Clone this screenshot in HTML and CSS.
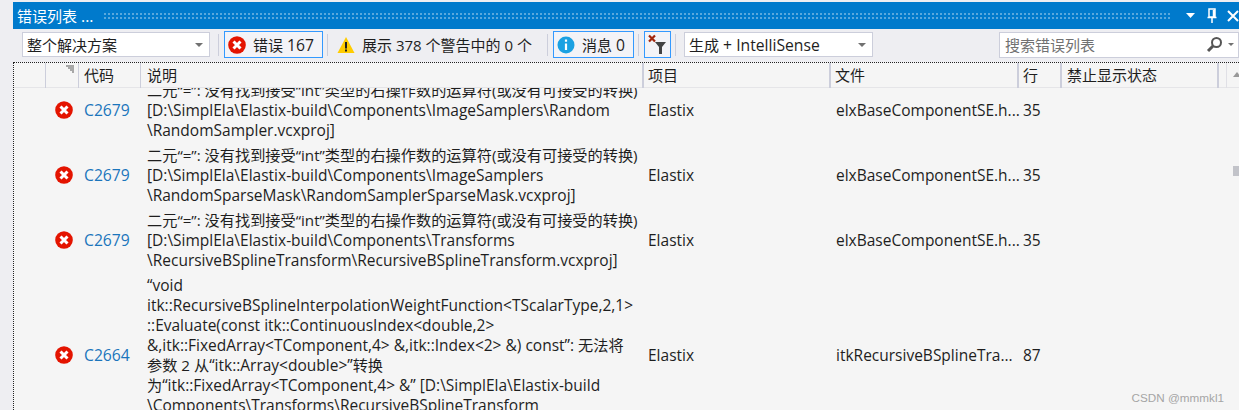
FILE: index.html
```html
<!DOCTYPE html>
<html lang="zh-CN">
<head>
  <meta charset="UTF-8">
  <title>错误列表</title>
  <link rel="stylesheet" href="styles.css">
</head>
<body>
  <svg class="defs" width="0" height="0">
    <symbol id="err" viewBox="0 0 18 18">
      <circle cx="9" cy="9" r="8.800" fill="#e41400"/>
      <path d="M5.500 5.500l7 7M12.500 5.500l-7 7" stroke="#fff" stroke-width="3" fill="none"/>
    </symbol>
  </svg>

  <div class="panel">
    <div class="titlebar">
      <span class="title"><span class="zh">错误列表</span> ...</span>
      <span class="grip"></span>
      <svg class="tb-icon" width="12" height="12" viewBox="0 0 12 12"><path d="M1 3h9l-4.500 5z" fill="#fff"/></svg>
      <svg class="tb-icon" width="12" height="16" viewBox="0 0 12 16"><path d="M3 1h6v8H3zM1.500 9.500h9M6 10v5M7.500 2v6.500" stroke="#fff" stroke-width="1.500" fill="none"/></svg>
      <svg class="tb-icon" width="12" height="12" viewBox="0 0 12 12"><path d="M1 1l10 10M11 1L1 11" stroke="#fff" stroke-width="2" fill="none"/></svg>
    </div>

    <div class="toolbar">
      <div class="combo combo-scope"><span class="zh">整个解决方案</span><i class="caret"></i></div>
      <span class="sep sep-first"></span>
      <div class="tbtn on btn-err"><svg width="18" height="18"><use href="#err"/></svg><span><span class="zh">错误</span> 167</span></div>
      <span class="sep"></span>
      <div class="tbtn btn-warn">
        <svg width="18" height="18" viewBox="0 0 18 18"><path d="M9 1l8.500 16H.5z" fill="#ffcc00"/><path d="M9 6v6.500M9 13.500v2" stroke="#1e1e1e" stroke-width="2" fill="none"/></svg><span class="zh">展示 378 个警告中的 0 个</span>
      </div>
      <span class="sep"></span>
      <div class="tbtn on btn-info">
        <svg width="18" height="18" viewBox="0 0 18 18"><circle cx="9" cy="9" r="8.500" fill="#1ba1e2"/><path d="M9 7.500v6.500M9 3.500v2.300" stroke="#fff" stroke-width="2.200" fill="none"/></svg><span><span class="zh">消息</span> 0</span>
      </div>
      <span class="sep"></span>
      <div class="tbtn on btn-filter">
        <svg width="22" height="22" viewBox="0 0 22 22"><path d="M2 1.500l6 6M8 1.500l-6 6" stroke="#a1260d" stroke-width="2.200" fill="none"/><path d="M8 8h11l-4 5v7h-3v-7z" fill="#424242"/></svg>
      </div>
      <span class="sep"></span>
      <div class="combo combo-kind"><span><span class="zh">生成</span> + IntelliSense</span><i class="caret"></i></div>
      <div class="search">
        <span class="zh search-text">搜索错误列表</span>
        <svg width="18" height="18" viewBox="0 0 18 18"><circle cx="10.500" cy="6.500" r="4.500" stroke="#555" stroke-width="2" fill="none"/><path d="M7 10l-5 5" stroke="#555" stroke-width="3" fill="none"/></svg>
        <i class="caret caret-small"></i>
      </div>
    </div>

    <div class="list">
      <div class="cols head">
        <div class="hcell"></div>
        <div class="hcell grip-cell">
          <svg width="8" height="8" viewBox="0 0 8 8"><path d="M0 0h8v2H0zM2 2h6v2H2zM4 4h4v2H4zM6 6h2v2H6z" fill="#a8a8a8"/></svg>
        </div>
        <div class="hcell zh">代码</div>
        <div class="hcell zh">说明</div>
        <div class="hcell zh">项目</div>
        <div class="hcell zh">文件</div>
        <div class="hcell zh">行</div>
        <div class="hcell zh">禁止显示状态</div>
        <div class="hcell sort"><i class="sort-up"></i></div>
      </div>

      <div class="rows">
        <div class="cols row">
          <div></div>
          <div class="icon"><svg width="18" height="18"><use href="#err"/></svg></div>
          <div class="code">C2679</div>
          <div class="desc"><span class="zh">二元“=”: 没有找到接受“int”类型的右操作数的运算符(或没有可接受的转换)</span><br>[D:\SimplEla\Elastix-build\Components\ImageSamplers\Random<br>\RandomSampler.vcxproj]</div>
          <div class="cell cell-project">Elastix</div>
          <div class="cell">elxBaseComponentSE.h...</div>
          <div class="cell cell-line">35</div>
        </div>
        <div class="cols row">
          <div></div>
          <div class="icon"><svg width="18" height="18"><use href="#err"/></svg></div>
          <div class="code">C2679</div>
          <div class="desc"><span class="zh">二元“=”: 没有找到接受“int”类型的右操作数的运算符(或没有可接受的转换)</span><br>[D:\SimplEla\Elastix-build\Components\ImageSamplers<br>\RandomSparseMask\RandomSamplerSparseMask.vcxproj]</div>
          <div class="cell cell-project">Elastix</div>
          <div class="cell">elxBaseComponentSE.h...</div>
          <div class="cell cell-line">35</div>
        </div>
        <div class="cols row">
          <div></div>
          <div class="icon"><svg width="18" height="18"><use href="#err"/></svg></div>
          <div class="code">C2679</div>
          <div class="desc"><span class="zh">二元“=”: 没有找到接受“int”类型的右操作数的运算符(或没有可接受的转换)</span><br>[D:\SimplEla\Elastix-build\Components\Transforms<br>\RecursiveBSplineTransform\RecursiveBSplineTransform.vcxproj]</div>
          <div class="cell cell-project">Elastix</div>
          <div class="cell">elxBaseComponentSE.h...</div>
          <div class="cell cell-line">35</div>
        </div>
        <div class="cols row">
          <div></div>
          <div class="icon"><svg width="18" height="18"><use href="#err"/></svg></div>
          <div class="code">C2664</div>
          <div class="desc">“void<br>itk::RecursiveBSplineInterpolationWeightFunction&lt;TScalarType,2,1&gt;<br>::Evaluate(const itk::ContinuousIndex&lt;double,2&gt;<br>&amp;,itk::FixedArray&lt;TComponent,4&gt; &amp;,itk::Index&lt;2&gt; &amp;) const”: <span class="zh">无法将</span><br><span class="zh">参数 2 从</span>“itk::Array&lt;double&gt;”<span class="zh">转换</span><br><span class="zh">为</span>“itk::FixedArray&lt;TComponent,4&gt; &amp;” [D:\SimplEla\Elastix-build<br>\Components\Transforms\RecursiveBSplineTransform<br>\RecursiveBSplineTransform.vcxproj]</div>
          <div class="cell cell-project">Elastix</div>
          <div class="cell">itkRecursiveBSplineTra...</div>
          <div class="cell cell-line">87</div>
        </div>
      </div>
      <i class="thumb"></i>
    </div>
  </div>

  <div class="mark">CSDN @mmmkl1</div>
</body>
</html>
```

FILE: styles.css
```css
* { box-sizing: border-box; }

html, body {
  margin: 0;
  height: 410px;
  overflow: hidden;
}

body {
  position: relative;
  background: #eeeef2;
  font-family: "Open Sans", "Noto Sans CJK SC", sans-serif;
  font-size: 15.7px;
  color: #1e1e1e;
  padding: 2px 0 0 13px;
}

.zh { font-size: 15px; }

.defs { position: absolute; }

.titlebar {
  height: 27px;
  background: #007acc;
  color: #fff;
  display: flex;
  align-items: center;
  padding: 0 0 0 4px;
  gap: 9px;
}

.title { white-space: nowrap; }

.grip {
  flex: 1;
  height: 8px;
  margin: 0 5px 0 1px;
  background-image: radial-gradient(circle, #59a8dd 0.8px, transparent 1px);
  background-size: 4px 4px;
}

.tb-icon { flex: none; }

.toolbar {
  height: 33px;
  display: flex;
  align-items: center;
  padding: 0 0 2px 9px;
  white-space: nowrap;
}

.combo {
  height: 25px;
  background: #fff;
  border: 1px solid #cccedb;
  display: flex;
  align-items: center;
  justify-content: space-between;
  padding: 0 6px 0 4px;
}

.combo-scope { width: 188px; }
.combo-kind { width: 189px; margin-left: 3px; }

.caret {
  width: 0;
  height: 0;
  border: 4px solid transparent;
  border-top: 4px solid #717171;
  border-bottom: 0;
  margin-left: 4px;
}

.caret-small { border-width: 3px; border-top-color: #717171; border-bottom: 0; }

.sep {
  width: 1px;
  height: 22px;
  background: #cccedb;
  margin: 0 5px 0 4px;
}

.sep-first { margin-left: 8px; }

.tbtn {
  height: 27px;
  display: flex;
  align-items: center;
  gap: 7px;
  padding: 0 4px;
  border: 1px solid transparent;
}

.tbtn svg { flex: none; }

.tbtn.on { border-color: #3399ff; background: #f3f3f7; }
.btn-err { width: 99px; padding-left: 3px; }
.btn-warn { width: 210px; padding-left: 3px; }
.btn-info { width: 81px; padding-left: 3px; }
.btn-filter { width: 27px; padding: 0 1px; justify-content: center; }

.search {
  width: 240px;
  height: 26px;
  margin-left: auto;
  background: #fff;
  border: 1px solid #cccedb;
  display: flex;
  align-items: center;
  padding: 0 4px 0 5px;
  color: #717171;
}

.search-text { flex: 1; }

.list {
  position: relative;
  height: 348px;
  border-top: 1px dotted #222;
  border-left: 1px dotted #222;
  background: #f5f5f5;
  overflow: hidden;
}

.cols {
  display: grid;
  grid-template-columns: 32px 33px 62px 503px 187px 188px 43px 157px 8px;
}

.head {
  position: relative;
  z-index: 1;
  height: 25px;
  background: #f5f5f5;
  border-bottom: 1px solid #e5e5e8;
}

.hcell {
  border-right: 2px solid #cccedb;
  padding-left: 4px;
  line-height: 25px;
  white-space: nowrap;
}

.hcell:nth-child(-n+3) { border-right-width: 1px; }
.hcell:nth-child(3), .hcell:nth-child(8) { padding-left: 5px; }
.hcell:nth-child(4) { padding-left: 6px; }

.grip-cell {
  display: flex;
  justify-content: flex-end;
  padding: 2px 4px 0 0;
}

.grip-cell svg { display: block; }

.hcell.sort { border-right: 1px solid #e0e0e6; }

.sort-up {
  position: absolute;
  left: 1219px;
  top: 9px;
  width: 0;
  height: 0;
  border: 4px solid transparent;
  border-bottom: 5px solid #999;
  border-top: 0;
}

.rows { margin-top: -11px; }

.row {
  padding: 2.5px 0;
  line-height: 20px;
  align-items: center;
  font-size: 15.5px;
}

.icon { display: flex; align-items: center; justify-content: flex-end; padding-right: 6px; }
.icon svg { display: block; }

.code { color: #1b75bc; padding-left: 5px; font-size: 15.7px; }

.desc { padding-left: 6px; white-space: nowrap; }
.desc .zh { font-size: 15.2px; }

.cell { padding-left: 5px; white-space: nowrap; }

.cell-project { padding-left: 4px; }
.cell-line { padding-left: 4px; }

.thumb {
  position: absolute;
  left: 1219px;
  top: 103px;
  width: 6px;
  height: 10px;
  background: #c2c3c9;
}

.mark {
  position: absolute;
  right: 15px;
  bottom: 6px;
  font-family: "Liberation Sans", sans-serif;
  font-size: 11.7px;
  color: #a5a5a5;
}
```
